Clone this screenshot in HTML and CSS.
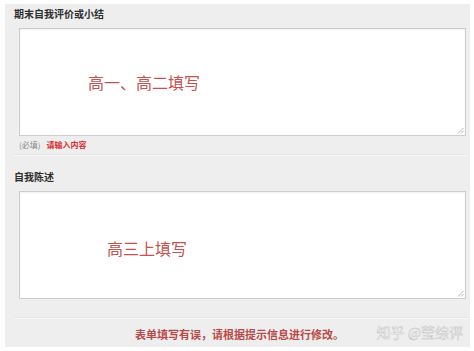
FILE: index.html
```html
<!DOCTYPE html>
<html lang="zh">
<head>
<meta charset="utf-8">
<link rel="stylesheet" href="styles.css">
</head>
<body>
<div class="panel">
  <div class="section">
    <div class="label">期末自我评价或小结</div>
    <div class="box box-one">
      <span class="note">高一、高二填写</span>
      <svg class="grip" width="7" height="7" viewBox="0 0 7 7"><path d="M6.5 1L1 6.5M6.5 4L4 6.5" stroke="#b8b8b8" stroke-width="1"/></svg>
    </div>
    <div class="hint"><span class="req">(必填)</span><span class="err">请输入内容</span></div>
  </div>
  <div class="divider"></div>
  <div class="section section-two">
    <div class="label">自我陈述</div>
    <div class="box box-two">
      <span class="note">高三上填写</span>
      <svg class="grip" width="7" height="7" viewBox="0 0 7 7"><path d="M6.5 1L1 6.5M6.5 4L4 6.5" stroke="#b8b8b8" stroke-width="1"/></svg>
    </div>
  </div>
  <div class="divider divider-bottom"></div>
  <div class="footer">
    <span class="message">表单填写有误，请根据提示信息进行修改。</span>
    <span class="watermark">知乎 @莹综评</span>
  </div>
</div>
</body>
</html>
```

FILE: styles.css
```css
html, body {
  margin: 0;
  padding: 0;
  background: #ffffff;
}
body {
  font-family: "Noto Sans CJK SC", "Noto Sans", sans-serif;
  width: 474px;
  height: 351px;
  overflow: hidden;
}
.panel {
  position: relative;
  margin: 4px 4px 0 5px;
  background: #eeeeee;
  height: 343px;
  box-sizing: border-box;
}
.section {
  padding: 4px 0 0 9px;
}
.section-two {
  padding-top: 15px;
}
.label {
  font-size: 10px;
  line-height: 12px;
  font-weight: bold;
  color: #2e2e2e;
  margin-bottom: 8px;
}
.box {
  position: relative;
  margin-left: 5px;
  width: 447px;
  height: 108px;
  box-sizing: border-box;
  background: #ffffff;
  border: 1px solid #cdcdcd;
  box-shadow: inset 0 1px 2px rgba(0,0,0,0.06);
  display: flex;
  align-items: center;
}
.box-one {
  padding-left: 68px;
}
.box-two {
  padding-left: 87px;
  padding-top: 5px;
}
.note {
  font-size: 16px;
  line-height: 20px;
  color: #c4524f;
}
.grip {
  position: absolute;
  right: 1px;
  bottom: 1px;
}
.hint {
  margin: 4px 0 0 5px;
  font-size: 8px;
  line-height: 10px;
  display: flex;
  gap: 6px;
}
.req {
  color: #888888;
}
.err {
  color: #d83030;
  font-weight: bold;
}
.divider {
  margin: 4px 2px 0 9px;
  height: 1px;
  background: #f8f8f8;
  border-top: 1px solid #e6e6e6;
}
.divider-bottom {
  margin-top: 18px;
}
.footer {
  height: 30px;
  display: flex;
  align-items: center;
  justify-content: center;
}
.message {
  font-size: 11px;
  font-weight: bold;
  color: #b84a48;
  margin-left: 4px;
}
.watermark {
  position: absolute;
  right: 7px;
  bottom: 6px;
  font-size: 14px;
  line-height: 18px;
  color: #f6f6f6;
  -webkit-text-stroke: 0.4px #bdbdbd;
}
```
